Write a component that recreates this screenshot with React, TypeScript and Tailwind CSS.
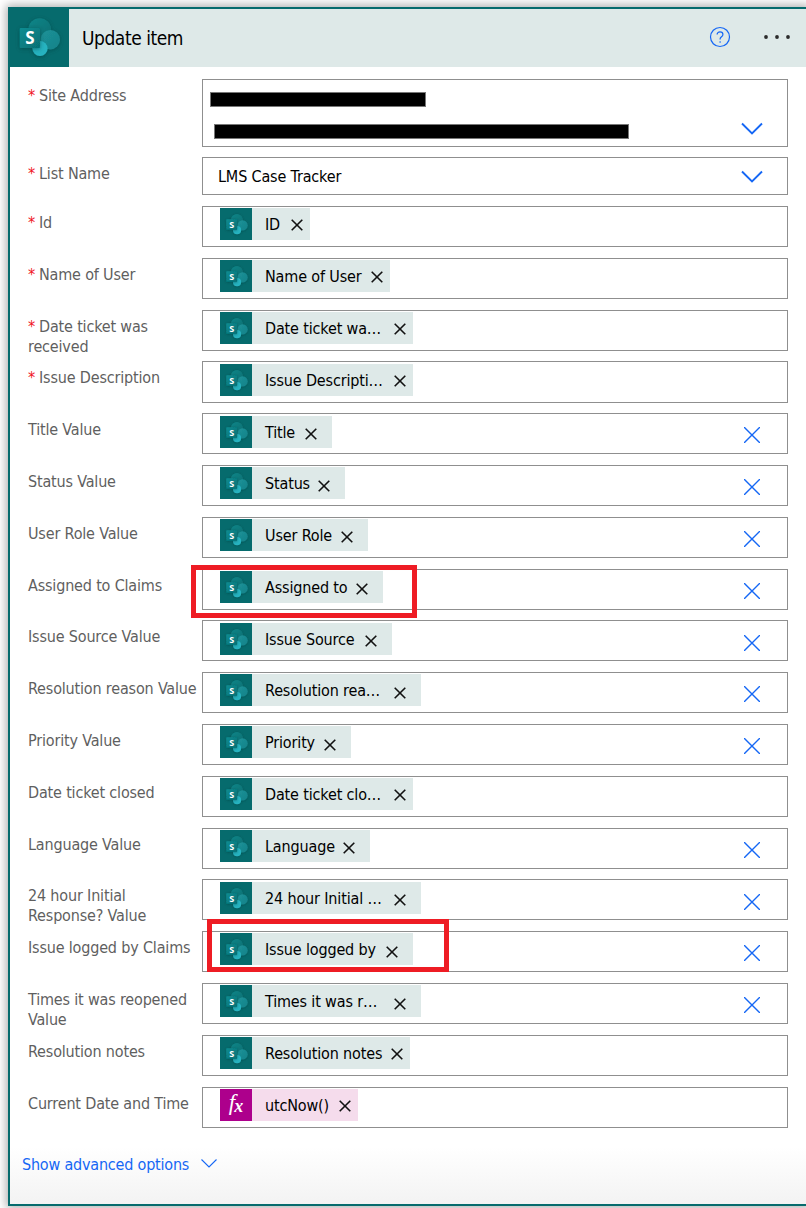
import clsx from 'clsx';

type Field = {
  label: string;
  required?: boolean;
  token: string;
  // token width in px
  width: number;
  clearable?: boolean;
  expression?: boolean;
  highlight?: string;
}

const fields: Field[] = [
  { label: 'Id', required: true, token: 'ID', width: 90 },
  { label: 'Name of User', required: true, token: 'Name of User', width: 170 },
  { label: 'Date ticket was received', required: true, token: 'Date ticket wa…', width: 193 },
  { label: 'Issue Description', required: true, token: 'Issue Descripti…', width: 193 },
  { label: 'Title Value', token: 'Title', width: 112, clearable: true },
  { label: 'Status Value', token: 'Status', width: 125, clearable: true },
  { label: 'User Role Value', token: 'User Role', width: 148, clearable: true },
  { label: 'Assigned to Claims', token: 'Assigned to', width: 163, clearable: true, highlight: '-left-[11px] -top-[4px] w-[226px] h-[53px]' },
  { label: 'Issue Source Value', token: 'Issue Source', width: 172, clearable: true },
  { label: 'Resolution reason Value', token: 'Resolution rea…', width: 201, clearable: true },
  { label: 'Priority Value', token: 'Priority', width: 131, clearable: true },
  { label: 'Date ticket closed', token: 'Date ticket clo…', width: 193 },
  { label: 'Language Value', token: 'Language', width: 150, clearable: true },
  { label: '24 hour Initial Response? Value', token: '24 hour Initial …', width: 201, clearable: true },
  { label: 'Issue logged by Claims', token: 'Issue logged by', width: 193, clearable: true, highlight: 'left-[5px] -top-[12px] w-[242px] h-[53px]' },
  { label: 'Times it was reopened Value', token: 'Times it was r…', width: 201, clearable: true },
  { label: 'Resolution notes', token: 'Resolution notes', width: 190 },
  { label: 'Current Date and Time', token: 'utcNow()', width: 138, expression: true },
]

const SharePointIcon = ({ className }: { className: string }) => (
  <svg viewBox="0 0 60 60" className={className}>
    <defs>
      <filter id="sp-shadow" x="-40%" y="-40%" width="180%" height="180%">
        <feDropShadow dx="0" dy="1" stdDeviation="2" floodColor="#023f42" floodOpacity="0.6" />
      </filter>
      <linearGradient id="sp-top" x1="0" y1="0" x2="1" y2="1">
        <stop offset="0" stopColor="#108689" />
        <stop offset="1" stopColor="#0a6d70" />
      </linearGradient>
      <linearGradient id="sp-right" x1="0" y1="0" x2="1" y2="1">
        <stop offset="0" stopColor="#1b9298" />
        <stop offset="1" stopColor="#178289" />
      </linearGradient>
      <linearGradient id="sp-square" x1="0" y1="0" x2="1" y2="1">
        <stop offset="0" stopColor="#0a8d92" />
        <stop offset="1" stopColor="#066f73" />
      </linearGradient>
    </defs>
    <rect width="60" height="60" fill="#066b6d" />
    <g filter="url(#sp-shadow)">
      <circle cx="31.7" cy="22.6" r="11.4" fill="url(#sp-top)" />
      <circle cx="42.3" cy="32.7" r="9.7" fill="url(#sp-right)" />
      <circle cx="32" cy="41.5" r="7.6" fill="#28b3c0" />
    </g>
    <rect x="11.7" y="21" width="20.3" height="20" rx="1" fill="url(#sp-square)" filter="url(#sp-shadow)" />
    <text
      x="22"
      y="37"
      textAnchor="middle"
      fill="#fff"
      className="font-['Noto_Sans'] text-[17px] font-bold font-stretch-normal"
    >
      S
    </text>
  </svg>
)

const Chevron = () => (
  <svg width="22" height="13" viewBox="0 0 22 13" className="mr-[24px]" fill="none" stroke="#1567f5" strokeWidth="1.9">
    <path d="M1 1.5l10 10 10-10" />
  </svg>
)

const Label = ({ text, required }: { text: string, required?: boolean }) => (
  <label className="w-[174px] shrink-0 pt-[7px] text-[16px] leading-5 tracking-[-0.17px] text-[#5f5f5f]">
    {required && <span className="mr-[3px] inline-block w-2 text-[#f01526]">*</span>}
    {text}
  </label>
)

const Token = ({ field }: { field: Field }) => (
  <div
    className={clsx('ml-[17px] mt-[1.35px] flex h-8', field.expression ? 'bg-[#f5dcec]' : 'bg-[#dee9e8]')}
    style={{ width: field.width }}
  >
    {field.expression ? (
      <div className="flex size-8 items-center justify-center bg-[#ad008c] pb-1 font-['Liberation_Serif',serif] text-[23px] italic leading-none text-white">
        f<span className="-ml-px mt-1.5 text-[18px] font-bold">x</span>
      </div>
    ) : (
      <SharePointIcon className="size-8" />
    )}
    <span className="ml-[13px] whitespace-nowrap pt-px text-[16px] leading-8 tracking-[-0.15px] text-black">{field.token}</span>
    <svg
      width="12"
      height="12"
      viewBox="0 0 12 12"
      className={clsx('ml-auto', field.clearable ? 'mr-[15.5px] mt-[12.4px]' : 'mr-[7.5px] mt-[11px]')}
      stroke="#111"
      strokeWidth="1.6"
    >
      <path d="M.7.7l10.6 10.6M11.3.7L.7 11.3" />
    </svg>
  </div>
)

const FieldRow = ({ field }: { field: Field }) => (
  <div className="flex h-[51.8px]">
    <Label text={field.label} required={field.required} />
    <div className="relative w-[586px]">
      <div className="flex h-[41.15px] justify-between border border-[#8f8f8f] bg-white">
        <Token field={field} />
        {field.clearable && (
          <svg width="16" height="16" viewBox="0 0 16 16" className="mr-[27px] mt-[13.2px]" stroke="#1567f5" strokeWidth="1.4">
            <path d="M0 0l16 16M16 0L0 16" />
          </svg>
        )}
      </div>
      {field.highlight && <div className={clsx('absolute z-10 border-[5px] border-[#ee1c24]', field.highlight)} />}
    </div>
  </div>
)

const App = () => {
  return (
    <div className="h-[1208px] w-[806px] overflow-hidden bg-white pl-2 pt-[7px] font-['DejaVu_Sans_Condensed','DejaVu_Sans',sans-serif] font-stretch-condensed">
      <div className="flex h-[1199px] w-[800px] flex-col border-2 border-[#066b6d] bg-[linear-gradient(to_bottom,#fff_1138px,#f3f3f3_1195px)] shadow-[0_0_9px_2px_rgba(0,0,0,0.32)]">
        <header className="flex h-[58px] shrink-0 items-center bg-[#dee9e8]">
          <div className="-ml-0.5 -mt-0.5 h-[60px] w-[61px] bg-[#066b6d]">
            <SharePointIcon className="size-[60px]" />
          </div>
          <h1 className="ml-[13px] text-[19px] tracking-[-0.45px] text-black">Update item</h1>
          <svg width="22" height="22" viewBox="0 0 22 22" className="ml-auto mb-0.5" fill="none" stroke="#1567f5" strokeWidth="1.2">
            <circle cx="11" cy="11" r="9.5" />
            <path d="M8.1 8.6c0-1.7 1.2-2.8 2.9-2.8s2.9 1.1 2.9 2.6c0 2.3-2.8 2.3-2.8 4.6v.6M11.1 15.2v1.6" />
          </svg>
          <svg width="28" height="6" viewBox="0 0 28 6" className="mb-[1.5px] ml-8 mr-[15px]" fill="#2b2b2b">
            <circle cx="3" cy="3" r="1.9" />
            <circle cx="14" cy="3" r="1.9" />
            <circle cx="25" cy="3" r="1.9" />
          </svg>
        </header>

        <div className="pl-[18px] pt-3">
          <div className="flex h-[78px]">
            <Label text="Site Address" required />
            <div className="flex h-[68px] w-[586px] items-end justify-between border border-[#8f8f8f] bg-white pb-[11px]">
              <div className="mb-[-4px] flex flex-col gap-[17px] pl-[7px]">
                <div className="h-[15px] w-[216px] border border-[#777] bg-black" />
                <div className="ml-1 h-[15px] w-[415px] border border-[#777] bg-black" />
              </div>
              <Chevron />
            </div>
          </div>
          <div className="flex h-[48.97px]">
            <Label text="List Name" required />
            <div className="flex h-[38px] w-[586px] items-center justify-between border border-[#8f8f8f] bg-white">
              <span className="pl-[15px] pt-0.5 text-[16px] tracking-[-0.15px] text-black">LMS Case Tracker</span>
              <Chevron />
            </div>
          </div>
          {fields.map((field) => (
            <FieldRow key={field.label} field={field} />
          ))}
        </div>

        <button className="ml-3 mt-[15px] flex items-center text-[16px] tracking-[-0.2px] text-[#1567f5]">
          Show advanced options
          <svg width="16" height="9" viewBox="0 0 16 9" className="mb-[3px] ml-3" fill="none" stroke="#1567f5" strokeWidth="1.1">
            <path d="M.5.5L8 8l7.5-7.5" />
          </svg>
        </button>
      </div>
    </div>
  )
}

export default App
